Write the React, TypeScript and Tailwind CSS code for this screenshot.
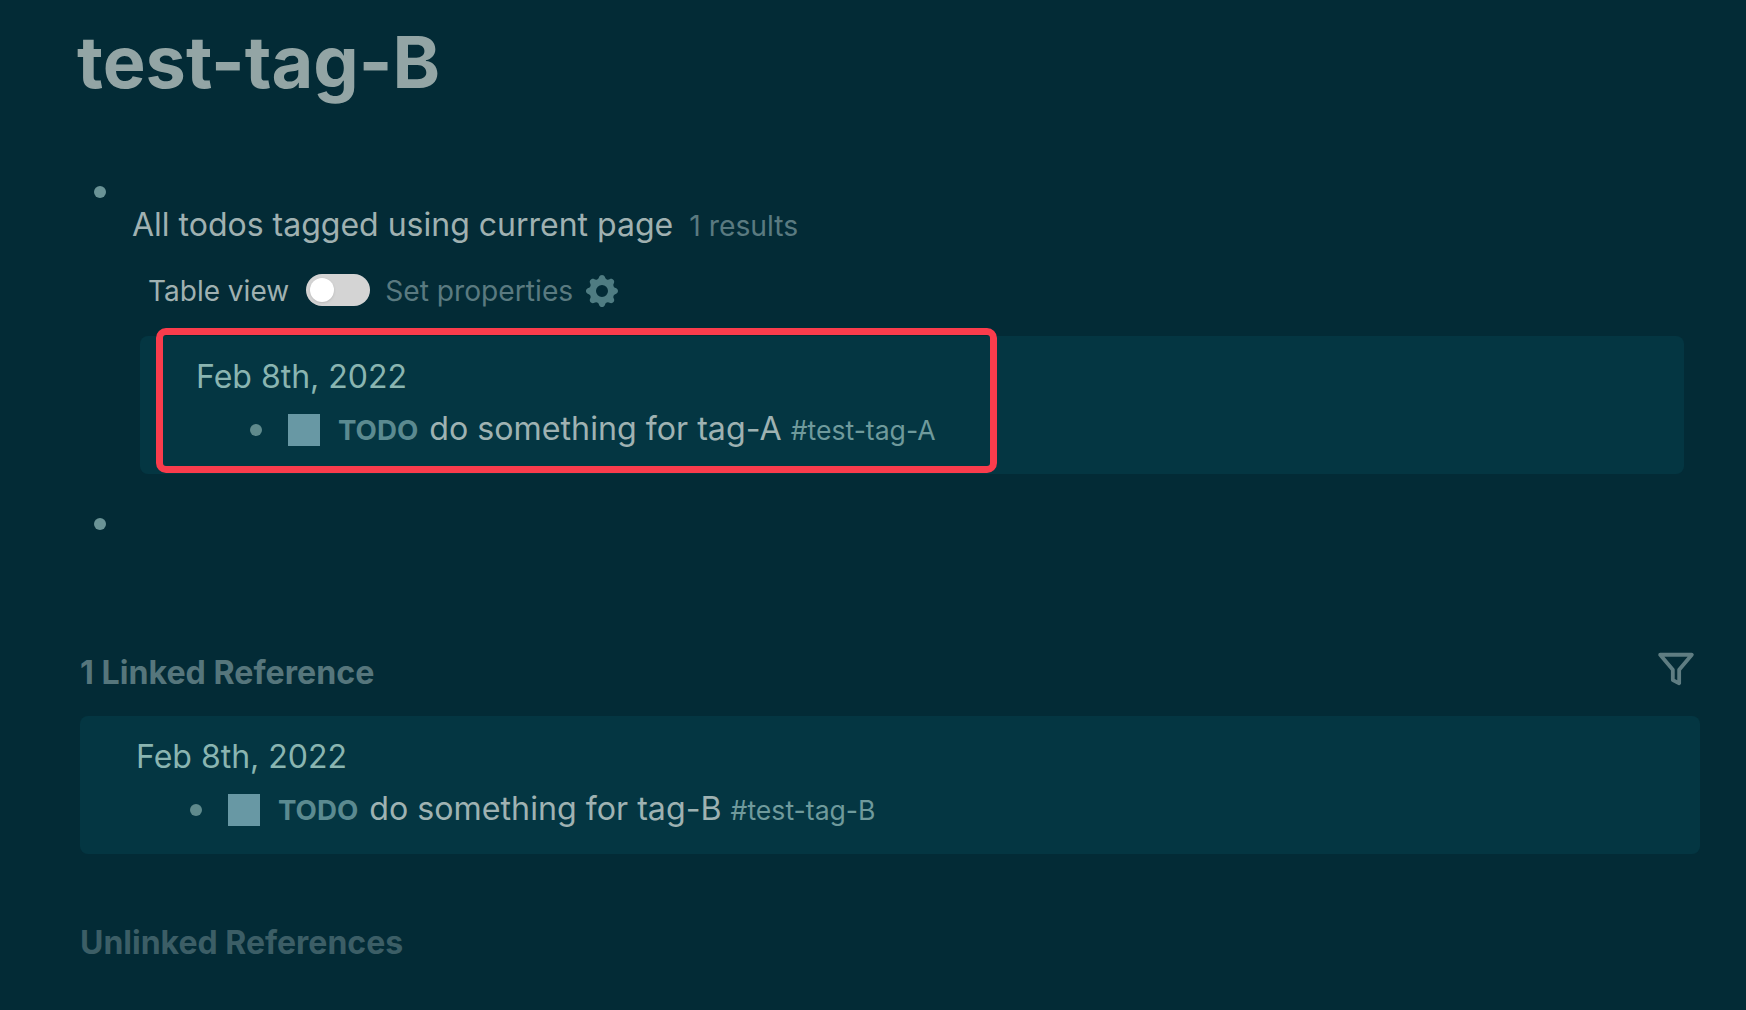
import { HiCog } from 'react-icons/hi'

function TodoCard({ label, tag }: { label: string; tag: string }) {
  return (
    <div className="h-[138px] rounded-lg bg-[#043642] pl-[56px] pt-[21px]">
      <div className="text-[32px] leading-[40px] text-[#8ab5b1]">Feb 8th, 2022</div>
      <div className="mt-[17px] flex h-[32px] items-center pl-[54px]">
        <span className="h-[12px] w-[12px] rounded-full bg-[#5f8a8c]" />
        <span className="ml-[26px] h-[32px] w-[32px] bg-[#6898a4]" />
        <div className="-mt-[2px] ml-[18px] flex items-baseline whitespace-nowrap">
          <span className="text-[27.7px] leading-[32px] font-bold text-[#5b8a90]">TODO</span>
          <span className="ml-[11px] text-[32.2px] leading-[32px] text-[#9fb2b2]">{label}</span>
          <span className="ml-[9px] text-[26.6px] leading-[32px] text-[#6f9a9c]">{tag}</span>
        </div>
      </div>
    </div>
  )
}

export default function App() {
  return (
    <div className="h-[1010px] w-[1746px] overflow-hidden bg-[#032b36] pl-[80px] pr-[46px] pt-[20px] font-['Inter',sans-serif]">
      <h1 className="-ml-[3px] text-[72px] leading-[84px] font-bold text-[#93a5a5]">test-tag-B</h1>

      <div className="mt-[75px] flex h-[26px] items-center pl-[14px]">
        <span className="h-[12px] w-[12px] rounded-full bg-[#6a9396]" />
      </div>

      <div className="pl-[52px] pr-[16px]">
        <div className="flex items-baseline whitespace-nowrap">
          <span className="text-[32px] leading-[40px] text-[#a0b1b1]">All todos tagged using current page</span>
          <span className="ml-[16px] text-[28.3px] leading-[40px] text-[#5a7a80]">1 results</span>
        </div>

        <div className="mt-[28px] flex h-[32px] items-center pl-[16px]">
          <span className="mt-[2px] text-[28px] leading-[32px] text-[#a0b1b1]">Table view</span>
          <span className="ml-[17px] flex h-[32px] w-[64px] items-center rounded-full bg-[#d4d4d4] pl-[4px]">
            <span className="h-[24px] w-[24px] rounded-full bg-white shadow-sm" />
          </span>
          <span className="ml-[15px] mt-[2px] text-[28.2px] leading-[32px] text-[#5a7a80]">Set properties</span>
          <HiCog className="ml-[9px] mt-[2px] h-[40px] w-[40px] text-[#4f7c82]" />
        </div>

        <div className="relative ml-[8px] mt-[30px]">
          <TodoCard label="do something for tag-A" tag="#test-tag-A" />
          <div className="absolute -top-[8px] left-[16px] h-[145px] w-[841px] rounded-[10px] border-[7px] border-[#fa3c4c]" />
        </div>
      </div>

      <div className="mt-[38px] flex h-[24px] items-center pl-[14px]">
        <span className="h-[12px] w-[12px] rounded-full bg-[#6a9396]" />
      </div>

      <div className="mt-[117px] flex h-[40px] items-center justify-between pr-[5px]">
        <span className="text-[32.2px] leading-[40px] font-bold text-[#56767c]">1 Linked Reference</span>
        <svg className="-mt-[8px]" width="38" height="38" viewBox="0 0 24 24" fill="none" stroke="#5f7d82" strokeWidth="2.4" strokeLinecap="round" strokeLinejoin="round">
          <polygon points="22 3 2 3 10 12.46 10 19 14 21 14 12.46 22 3" />
        </svg>
      </div>

      <div className="mt-[23px]">
        <TodoCard label="do something for tag-B" tag="#test-tag-B" />
      </div>

      <div className="mt-[69px] text-[32px] leading-[40px] font-bold text-[#3c5e66]">Unlinked References</div>
    </div>
  )
}
